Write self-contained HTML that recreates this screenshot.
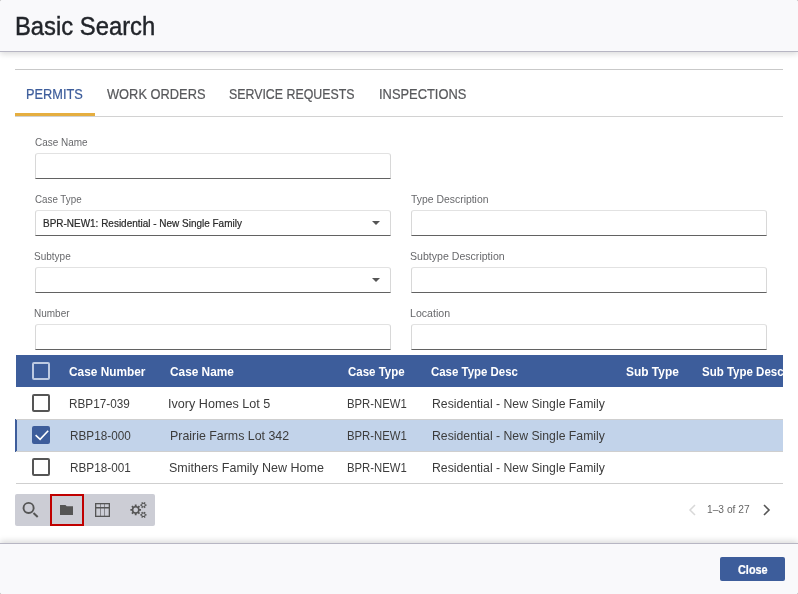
<!DOCTYPE html>
<html><head><meta charset="utf-8">
<style>
html,body{margin:0;padding:0;width:798px;height:594px;overflow:hidden;background:#9a9a9a;}
body{font-family:"Liberation Sans",sans-serif;}
#m{position:absolute;left:0;top:0;width:798px;height:594px;background:#fff;border-radius:2px;overflow:hidden;}
.t{position:absolute;white-space:nowrap;line-height:1;will-change:transform;}
#hdr{position:absolute;left:0;top:0;width:798px;height:51px;background:#f9f9fb;border-bottom:1px solid #b7b6c3;box-shadow:0 2px 6px rgba(0,0,0,0.15);}
.hl{position:absolute;left:15px;width:768px;height:1px;background:#c9c9c9;}
.inp{position:absolute;box-sizing:border-box;height:26px;background:#fff;border:1px solid #d8d8d8;border-top-color:#e2e2e2;border-bottom:1px solid #626262;border-radius:3px 3px 0 0;}
.arr{position:absolute;width:0;height:0;border-left:4px solid transparent;border-right:4px solid transparent;border-top:4px solid #555;}
#th{position:absolute;left:16px;top:355px;width:767px;height:32px;background:#3d5d9b;overflow:hidden;}
#thi{position:absolute;left:-16px;top:-355px;width:798px;height:594px;}
.cb{position:absolute;box-sizing:border-box;width:18px;height:18px;border:2px solid #555;border-radius:2px;background:#fff;}
.row{position:absolute;left:16px;width:767px;height:32px;}
.sep{position:absolute;left:16px;width:767px;height:1px;background:#cfcfcf;}
</style></head><body>
<div id="m">
  <div id="hdr"></div>

  <div class="hl" style="top:69px;"></div>
  <div class="hl" style="top:116px;background:#d2d2d2;"></div>
  <div style="position:absolute;left:15px;top:113px;width:80px;height:3px;background:#e5ae40;"></div>

  <!-- form -->
  <div class="inp" style="left:35px;top:153px;width:356px;"></div>
  <div class="inp" style="left:35px;top:210px;width:356px;"></div>
  <div class="arr" style="left:372px;top:221px;"></div>
  <div class="inp" style="left:411px;top:210px;width:356px;"></div>
  <div class="inp" style="left:35px;top:267px;width:356px;"></div>
  <div class="arr" style="left:372px;top:278px;"></div>
  <div class="inp" style="left:411px;top:267px;width:356px;"></div>
  <div class="inp" style="left:35px;top:324px;width:356px;"></div>
  <div class="inp" style="left:411px;top:324px;width:356px;"></div>

  <!-- table -->
  <div id="th"><div id="thi">
  <div class="cb" style="left:32px;top:362px;border-color:#bdcae2;background:transparent;"></div>
<div class="t" style="left:68.51px;top:367.00px;font-size:11.874px;color:#fff;font-weight:bold;transform:scaleY(1.130);transform-origin:0 10.05px;">Case Number</div>
<div class="t" style="left:169.81px;top:367.00px;font-size:11.859px;color:#fff;font-weight:bold;transform:scaleY(1.130);transform-origin:0 10.04px;">Case Name</div>
<div class="t" style="left:347.53px;top:367.00px;font-size:11.501px;color:#fff;font-weight:bold;transform:scaleY(1.130);transform-origin:0 9.74px;">Case Type</div>
<div class="t" style="left:431.29px;top:367.00px;font-size:11.458px;color:#fff;font-weight:bold;transform:scaleY(1.130);transform-origin:0 9.70px;">Case Type Desc</div>
<div class="t" style="left:626.38px;top:367.00px;font-size:11.943px;color:#fff;font-weight:bold;transform:scaleY(1.130);transform-origin:0 10.11px;">Sub Type</div>
<div class="t" style="left:701.87px;top:367.00px;font-size:11.500px;color:#fff;font-weight:bold;transform:scaleY(1.130);transform-origin:0 9.74px;">Sub Type Desc</div>
  </div></div>

  <div class="row" style="top:419px;background:#c2d3ea;"></div>
  <div style="position:absolute;left:15px;top:419px;width:2px;height:33px;background:#3d5d9b;"></div>
  <div class="sep" style="top:419px;"></div>
  <div class="sep" style="top:451px;"></div>
  <div class="sep" style="top:483px;"></div>

  <div class="cb" style="left:32px;top:394px;"></div>
  <div class="cb" style="left:32px;top:426px;background:#3d5d9b;border-color:#3d5d9b;"></div>
  <svg style="position:absolute;left:32px;top:426px;" width="18" height="18" viewBox="0 0 18 18"><path d="M3.6 9.2 L8.1 13.4 L16.2 4.8" fill="none" stroke="#fff" stroke-width="1.6"/></svg>
  <div class="cb" style="left:32px;top:458px;"></div>

  <!-- toolbar -->
  <div style="position:absolute;left:15px;top:494px;width:140px;height:32px;background:#cccdd5;border-radius:2px;"></div>
  <div style="position:absolute;left:50px;top:494px;width:34px;height:32px;box-sizing:border-box;border:2px solid #c00000;"></div>
  <svg style="position:absolute;left:15px;top:494px;" width="140" height="32" viewBox="0 0 140 32">
    <circle cx="13.6" cy="13.9" r="5.05" fill="none" stroke="#555" stroke-width="1.9"/>
    <path d="M18.5 19.1 L22.7 23" stroke="#555" stroke-width="2"/>
    <path d="M45 11 h5.5 l1.2 1.3 h6.3 v8.7 h-13 z" fill="#555"/>
    <path d="M85.5 10 v12 M89.5 10 v12" stroke="#86868b" stroke-width="1"/>
    <rect x="80.65" y="9.65" width="13.7" height="12.7" fill="none" stroke="#555" stroke-width="1.3"/>
    <path d="M80.5 13.75 h14" stroke="#555" stroke-width="1.5"/>
    <path fill="#555" fill-rule="evenodd" d="M124.59 14.97 L126.03 15.01 L126.03 16.79 L124.59 16.83 L124.11 17.99 L125.09 19.04 L123.84 20.29 L122.79 19.31 L121.63 19.79 L121.59 21.23 L119.81 21.23 L119.77 19.79 L118.61 19.31 L117.56 20.29 L116.31 19.04 L117.29 17.99 L116.81 16.83 L115.37 16.79 L115.37 15.01 L116.81 14.97 L117.29 13.81 L116.31 12.76 L117.56 11.51 L118.61 12.49 L119.77 12.01 L119.81 10.57 L121.59 10.57 L121.63 12.01 L122.79 12.49 L123.84 11.51 L125.09 12.76 L124.11 13.81Z M123.00 15.90 A2.3 2.3 0 1 0 118.40 15.90 A2.3 2.3 0 1 0 123.00 15.90Z M130.61 10.45 L131.58 10.45 L131.58 11.75 L130.61 11.75 L130.07 12.68 L130.56 13.53 L129.43 14.18 L128.94 13.34 L127.86 13.34 L127.37 14.18 L126.24 13.53 L126.73 12.68 L126.19 11.75 L125.22 11.75 L125.22 10.45 L126.19 10.45 L126.73 9.52 L126.24 8.67 L127.37 8.02 L127.86 8.86 L128.94 8.86 L129.43 8.02 L130.56 8.67 L130.07 9.52Z M129.70 11.10 A1.3 1.3 0 1 0 127.10 11.10 A1.3 1.3 0 1 0 129.70 11.10Z M130.61 20.15 L131.58 20.15 L131.58 21.45 L130.61 21.45 L130.07 22.38 L130.56 23.23 L129.43 23.88 L128.94 23.04 L127.86 23.04 L127.37 23.88 L126.24 23.23 L126.73 22.38 L126.19 21.45 L125.22 21.45 L125.22 20.15 L126.19 20.15 L126.73 19.22 L126.24 18.37 L127.37 17.72 L127.86 18.56 L128.94 18.56 L129.43 17.72 L130.56 18.37 L130.07 19.22Z M129.70 20.80 A1.3 1.3 0 1 0 127.10 20.80 A1.3 1.3 0 1 0 129.70 20.80Z"/>
  </svg>

  <!-- pagination -->
  <svg style="position:absolute;left:686px;top:502px;" width="90" height="16" viewBox="0 0 90 16">
    <path d="M9 3 L4 8 L9 13" fill="none" stroke="#d8d8d8" stroke-width="1.5"/>
    <path d="M78 3 L83 8 L78 13" fill="none" stroke="#555" stroke-width="1.6"/>
  </svg>

  <!-- footer -->
  <div style="position:absolute;left:0;top:543px;width:798px;height:51px;background:#f9f9fb;border-top:1px solid #b7b6c3;box-shadow:0 -2px 6px rgba(0,0,0,0.15);"></div>
  <div style="position:absolute;left:720px;top:557px;width:65px;height:24px;background:#3d5d9b;border-radius:2px;"></div>

<div class="t" style="left:14.57px;top:15.00px;font-size:23.806px;color:#22252a;transform:scaleY(1.090);transform-origin:0 20.16px;-webkit-text-stroke:0.4px #22252a;">Basic Search</div>
<div class="t" style="left:25.95px;top:89.00px;font-size:12.796px;color:#3d5d9b;transform:scaleY(1.130);transform-origin:0 10.83px;-webkit-text-stroke:0.2px #3d5d9b;">PERMITS</div>
<div class="t" style="left:107.22px;top:89.00px;font-size:12.858px;color:#58595c;transform:scaleY(1.130);transform-origin:0 10.89px;-webkit-text-stroke:0.2px #58595c;">WORK ORDERS</div>
<div class="t" style="left:228.92px;top:89.00px;font-size:12.372px;color:#58595c;transform:scaleY(1.130);transform-origin:0 10.48px;-webkit-text-stroke:0.2px #58595c;">SERVICE REQUESTS</div>
<div class="t" style="left:378.83px;top:89.00px;font-size:12.885px;color:#58595c;transform:scaleY(1.130);transform-origin:0 10.91px;-webkit-text-stroke:0.2px #58595c;">INSPECTIONS</div>
<div class="t" style="left:35.03px;top:138.00px;font-size:9.970px;color:#68696c;transform:scaleY(1.040);transform-origin:0 8.44px;">Case Name</div>
<div class="t" style="left:35.04px;top:195.00px;font-size:9.797px;color:#68696c;transform:scaleY(1.040);transform-origin:0 8.30px;">Case Type</div>
<div class="t" style="left:410.77px;top:195.00px;font-size:10.412px;color:#68696c;transform:scaleY(1.040);transform-origin:0 8.82px;">Type Description</div>
<div class="t" style="left:34.29px;top:252.00px;font-size:10.000px;color:#68696c;transform:scaleY(1.040);transform-origin:0 8.47px;">Subtype</div>
<div class="t" style="left:409.72px;top:251.00px;font-size:10.583px;color:#68696c;transform:scaleY(1.040);transform-origin:0 8.96px;">Subtype Description</div>
<div class="t" style="left:33.92px;top:309.00px;font-size:10.000px;color:#68696c;transform:scaleY(1.040);transform-origin:0 8.47px;">Number</div>
<div class="t" style="left:410.13px;top:308.00px;font-size:10.622px;color:#68696c;transform:scaleY(1.040);transform-origin:0 8.99px;">Location</div>
<div class="t" style="left:43.18px;top:219.00px;font-size:9.984px;color:#2a2a2a;transform:scaleY(1.050);transform-origin:0 8.45px;-webkit-text-stroke:0.2px #2a2a2a;">BPR-NEW1: Residential - New Single Family</div>
<div class="t" style="left:68.52px;top:398.00px;font-size:11.750px;color:#3c3c3c;transform:scaleY(1.120);transform-origin:0 9.95px;">RBP17-039</div>
<div class="t" style="left:168.34px;top:398.00px;font-size:12.610px;color:#3c3c3c;transform:scaleY(1.080);transform-origin:0 10.68px;">Ivory Homes Lot 5</div>
<div class="t" style="left:347.07px;top:399.00px;font-size:11.343px;color:#3c3c3c;transform:scaleY(1.120);transform-origin:0 9.60px;">BPR-NEW1</div>
<div class="t" style="left:432.04px;top:398.00px;font-size:12.251px;color:#3c3c3c;transform:scaleY(1.080);transform-origin:0 10.37px;">Residential - New Single Family</div>
<div class="t" style="left:69.56px;top:430.00px;font-size:11.750px;color:#3c3c3c;transform:scaleY(1.120);transform-origin:0 9.95px;">RBP18-000</div>
<div class="t" style="left:169.74px;top:430.00px;font-size:12.402px;color:#3c3c3c;transform:scaleY(1.080);transform-origin:0 10.50px;">Prairie Farms Lot 342</div>
<div class="t" style="left:347.07px;top:431.00px;font-size:11.343px;color:#3c3c3c;transform:scaleY(1.120);transform-origin:0 9.60px;">BPR-NEW1</div>
<div class="t" style="left:432.04px;top:430.00px;font-size:12.251px;color:#3c3c3c;transform:scaleY(1.080);transform-origin:0 10.37px;">Residential - New Single Family</div>
<div class="t" style="left:69.56px;top:462.00px;font-size:11.750px;color:#3c3c3c;transform:scaleY(1.120);transform-origin:0 9.95px;">RBP18-001</div>
<div class="t" style="left:169.43px;top:462.00px;font-size:12.512px;color:#3c3c3c;transform:scaleY(1.080);transform-origin:0 10.59px;">Smithers Family New Home</div>
<div class="t" style="left:347.07px;top:463.00px;font-size:11.343px;color:#3c3c3c;transform:scaleY(1.120);transform-origin:0 9.60px;">BPR-NEW1</div>
<div class="t" style="left:432.04px;top:462.00px;font-size:12.251px;color:#3c3c3c;transform:scaleY(1.080);transform-origin:0 10.37px;">Residential - New Single Family</div>
<div class="t" style="left:707.18px;top:505.00px;font-size:10.230px;color:#666;transform:scaleY(1.030);transform-origin:0 8.66px;">1–3 of 27</div>
<div class="t" style="left:737.59px;top:565.00px;font-size:10.883px;color:#fff;font-weight:bold;transform:scaleY(1.200);transform-origin:0 9.21px;-webkit-text-stroke:0.2px #fff;">Close</div>
</div>
</body></html>
